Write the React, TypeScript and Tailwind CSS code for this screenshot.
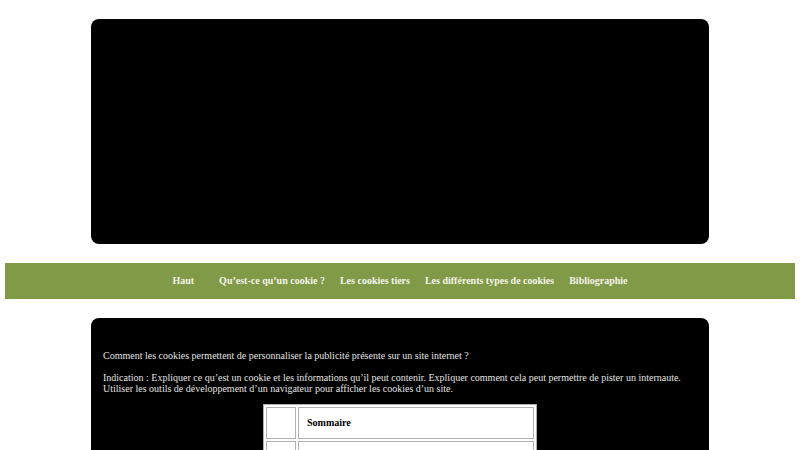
import React from "react";

const navItems = [
    { label: "Haut", extra: true },
    { label: "Qu’est-ce qu’un cookie ?" },
    { label: "Les cookies tiers" },
    { label: "Les différents types de cookies" },
    { label: "Bibliographie" },
];

export default function App() {
    return (
        <div className="min-h-screen bg-white font-['Liberation_Serif',serif] pt-[19px]">
            {/* bannière */}
            <div className="mx-auto w-[618px] h-[225px] bg-black rounded-lg"></div>

            {/* menu */}
            <nav className="mx-[5px] mt-[19px] h-[36px] pb-[2px] bg-[#809a48] flex items-center justify-center gap-[15px]">
                {navItems.map((item, i) => (
                    <a
                        key={i}
                        className={`text-[10px] font-bold text-[#f4f4ea] ${item.extra ? "mr-[10px]" : ""}`}
                    >
                        {item.label}
                    </a>
                ))}
            </nav>

            {/* contenu */}
            <div className="mx-auto mt-[19px] w-[618px] h-[200px] bg-black rounded-t-lg px-[12px] pt-[32px] text-[#e2e2e2] text-[10px] leading-[11px]">
                <p className="mb-[11px]">
                    Comment les cookies permettent de personnaliser la publicité présente sur un site internet ?
                </p>
                <p className="mb-[10px]">
                    Indication : Expliquer ce qu’est un cookie et les informations qu’il peut contenir. Expliquer comment cela peut permettre de pister un internaute.
                    <br />
                    Utiliser les outils de développement d’un navigateur pour afficher les cookies d’un site.
                </p>
                <table className="mx-auto w-[274px] border border-[#b0b0b0] border-separate border-spacing-[2px] bg-white text-black">
                    <tbody>
                        <tr className="h-[32px]">
                            <td className="w-[30px] border border-[#b0b0b0]"></td>
                            <td className="border border-[#b0b0b0] pl-[8px] pb-[2px] font-bold text-[10px]">Sommaire</td>
                        </tr>
                        <tr className="h-[32px]">
                            <td className="border border-[#b0b0b0]"></td>
                            <td className="border border-[#b0b0b0]"></td>
                        </tr>
                    </tbody>
                </table>
            </div>
        </div>
    );
}
